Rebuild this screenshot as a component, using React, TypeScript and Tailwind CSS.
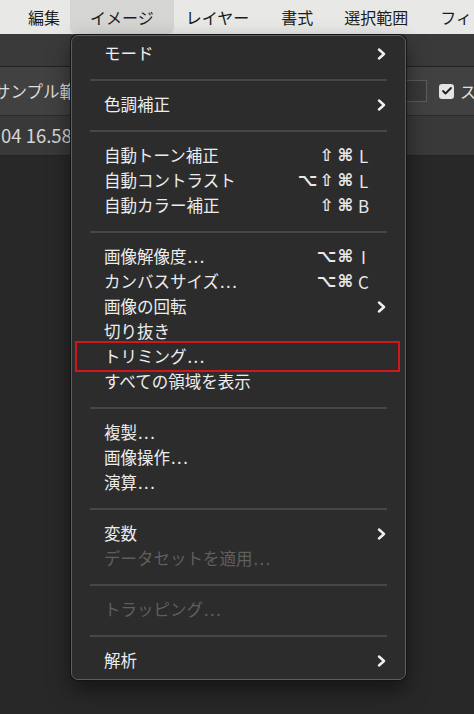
import { Check } from 'lucide-react';

type Item =
  | { kind: 'sep' }
  | { kind: 'item'; label: string; keys?: string[]; sub?: boolean; disabled?: boolean; marked?: boolean };

const menuItems: Item[] = [
  { kind: 'item', label: 'モード', sub: true },
  { kind: 'sep' },
  { kind: 'item', label: '色調補正', sub: true },
  { kind: 'sep' },
  { kind: 'item', label: '自動トーン補正', keys: ['⇧', '⌘', 'L'] },
  { kind: 'item', label: '自動コントラスト', keys: ['⌥', '⇧', '⌘', 'L'] },
  { kind: 'item', label: '自動カラー補正', keys: ['⇧', '⌘', 'B'] },
  { kind: 'sep' },
  { kind: 'item', label: '画像解像度...', keys: ['⌥', '⌘', 'I'] },
  { kind: 'item', label: 'カンバスサイズ...', keys: ['⌥', '⌘', 'C'] },
  { kind: 'item', label: '画像の回転', sub: true },
  { kind: 'item', label: '切り抜き' },
  { kind: 'item', label: 'トリミング...', marked: true },
  { kind: 'item', label: 'すべての領域を表示' },
  { kind: 'sep' },
  { kind: 'item', label: '複製...' },
  { kind: 'item', label: '画像操作...' },
  { kind: 'item', label: '演算...' },
  { kind: 'sep' },
  { kind: 'item', label: '変数', sub: true },
  { kind: 'item', label: 'データセットを適用...', disabled: true },
  { kind: 'sep' },
  { kind: 'item', label: 'トラッピング...', disabled: true },
  { kind: 'sep' },
  { kind: 'item', label: '解析', sub: true },
];

const jp = "font-['Noto_Sans_CJK_JP','Noto_Sans',sans-serif]";

function Chevron() {
  return (
    <svg width="9" height="12" viewBox="0 0 9 12" fill="none">
      <polyline points="2,1.5 7,6 2,10.5" stroke="#f0f0f0" strokeWidth="2.4" strokeLinecap="round" strokeLinejoin="round" />
    </svg>
  );
}

function Label({ text }: { text: string }) {
  if (!text.endsWith('...')) return <>{text}</>;
  return (
    <>
      {text.slice(0, -3)}
      <span className="ml-[1px] tracking-[1.5px]">...</span>
    </>
  );
}

function MenuRow({ item }: { item: Extract<Item, { kind: 'item' }> }) {
  return (
    <div className="relative flex h-[25px] items-center pl-[32px] pr-[19px]">
      <span className={`flex-1 text-[16.5px] leading-none ${item.disabled ? 'text-[#5f5f5f]' : 'text-[#ededed]'}`}>
        <Label text={item.label} />
      </span>
      {item.keys && (
        <span className="mr-[14px] flex items-center justify-end text-[#e8e8e8]">
          {item.keys.map((k, i) =>
            /[A-Z]/.test(k) ? (
              <span key={i} className="w-[17px] text-center text-[17px] leading-none">
                {k}
              </span>
            ) : (
              <span
                key={i}
                className="w-[19px] text-center font-['DejaVu_Sans',sans-serif] text-[17px] font-bold leading-none"
              >
                {k}
              </span>
            )
          )}
        </span>
      )}
      {item.sub && <Chevron />}
      {item.marked && (
        <div className="absolute -top-[3px] -bottom-[3px] left-[3px] right-[5px] border-2 border-[#d3151c]" />
      )}
    </div>
  );
}

export default function App() {
  return (
    <div className={`relative flex h-[714px] w-[474px] flex-col overflow-hidden bg-[#282828] ${jp}`}>
      {/* menu bar */}
      <div className="flex h-[34px] shrink-0 items-stretch overflow-hidden whitespace-nowrap bg-[#e8e8e6] text-[16px] text-[#1c1c1c]">
        <span className="ml-[28px] flex items-center">編集</span>
        <span className="ml-[10px] flex items-center rounded-b-[6px] bg-[#d5d5d3] px-[20px]">イメージ</span>
        <span className="ml-[12px] flex items-center">レイヤー</span>
        <span className="ml-[32px] flex items-center">書式</span>
        <span className="ml-[31px] flex items-center">選択範囲</span>
        <span className="ml-[32px] flex shrink-0 items-center">フィ</span>
      </div>

      {/* tool strip */}
      <div className="h-[33px] shrink-0 border-b border-[#222] bg-[#3a3a3a]" />

      {/* options bar */}
      <div className="flex h-[49px] shrink-0 items-center overflow-hidden whitespace-nowrap border-b border-[#2b2b2b] bg-[#414141]">
        <div className="w-[380px] shrink-0">
          <span className="-ml-[6px] text-[16.5px] text-[#dcdcdc]">サンプル範囲:</span>
        </div>
        <div className="h-[22px] w-[47px] shrink-0 border border-[#5c5c5c] bg-[#393939]" />
        <div className="ml-[12px] flex h-[15px] w-[15px] shrink-0 items-center justify-center rounded-[3px] bg-[#e4e4e4]">
          <Check size={12} strokeWidth={3.6} color="#1e1e1e" />
        </div>
        <span className="ml-[6px] shrink-0 text-[16px] text-[#e0e0e0]">ス</span>
      </div>

      {/* document tab */}
      <div className="flex h-[40px] shrink-0 items-center whitespace-nowrap border-b border-[#232323] bg-[#393939]">
        <span className="ml-[1px] text-[18.5px] text-[#d6d6d6]">04 16.58%</span>
      </div>

      <div className="flex-1 bg-[#282828]" />

      {/* open dropdown */}
      <div className="absolute left-[71px] top-[35px] w-[335px] rounded-[7px] border border-[#5e5e5e] bg-[#2c2c2d] pt-[5px] pb-[6px] shadow-[0_0_0_1px_#141414,0_10px_22px_rgba(0,0,0,0.5)]">
        {menuItems.map((item, i) =>
          item.kind === 'sep' ? (
            <div key={i} className="px-[18px] pt-[13px] pb-[11px]">
              <div className="h-[2px] bg-[#474747]" />
            </div>
          ) : (
            <MenuRow key={i} item={item} />
          )
        )}
      </div>
    </div>
  );
}
